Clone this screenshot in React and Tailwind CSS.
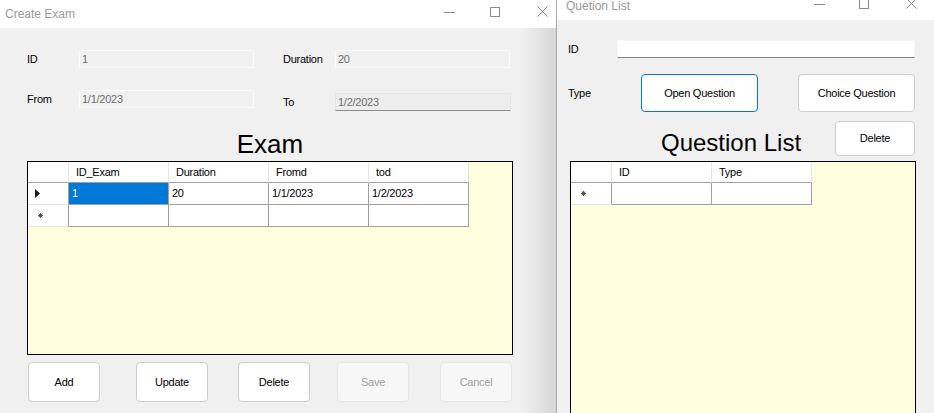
import React from "react";

const MinIcon = () => (
  <svg width="11" height="11" viewBox="0 0 11 11">
    <line x1="0" y1="6.5" x2="11" y2="6.5" stroke="#8a8a8a" strokeWidth="1" />
  </svg>
);

const MaxIcon = () => (
  <svg width="11" height="11" viewBox="0 0 11 11">
    <rect x="0.5" y="1.5" width="9" height="9" fill="none" stroke="#8a8a8a" strokeWidth="1" />
  </svg>
);

const CloseIcon = () => (
  <svg width="11" height="11" viewBox="0 0 11 11">
    <line x1="0.5" y1="0.5" x2="10.5" y2="10.5" stroke="#8a8a8a" strokeWidth="1" />
    <line x1="10.5" y1="0.5" x2="0.5" y2="10.5" stroke="#8a8a8a" strokeWidth="1" />
  </svg>
);

const RowArrow = () => (
  <svg width="5" height="9" viewBox="0 0 5 9">
    <path d="M0 0 L5 4.5 L0 9 Z" fill="#1a1a1a" />
  </svg>
);

const NewRowMark = () => (
  <svg width="5" height="5" viewBox="0 0 5 5">
    <line x1="2.5" y1="0" x2="2.5" y2="5" stroke="#555" strokeWidth="1.2" />
    <line x1="0" y1="2.5" x2="5" y2="2.5" stroke="#555" strokeWidth="1.2" />
    <line x1="0.7" y1="0.7" x2="4.3" y2="4.3" stroke="#555" strokeWidth="1" />
    <line x1="4.3" y1="0.7" x2="0.7" y2="4.3" stroke="#555" strokeWidth="1" />
  </svg>
);

const ReadBox = ({ value, picker }) => (
  <div
    className={
      picker
        ? "flex h-[18px] w-[176px] items-center border border-[#e4e4e4] border-b-[#8c8c8c] bg-[#ededed] pl-[2px] text-[#6d6d6d]"
        : "flex h-[18px] w-[175px] items-center border border-[#fbfbfb] bg-[#f0f0f0] pl-[2px] text-[#6d6d6d]"
    }
  >
    {value}
  </div>
);

const WinButton = ({ children, disabled, focused, className = "" }) => (
  <div
    className={`flex items-center justify-center rounded-[4px] border text-[11px] ${
      disabled
        ? "border-[#e6e6e6] bg-[#f7f7f7] text-[#a0a0a0]"
        : focused
        ? "border-[#0078d7] bg-white text-black"
        : "border-[#cccccc] bg-white text-black"
    } ${className}`}
  >
    {children}
  </div>
);

const DataGrid = ({ columns, rows, className }) => (
  <div className={`overflow-hidden border border-black bg-[#ffffe0] ${className}`}>
    <div className="flex">
      <div className="h-[21px] w-[41px] border-b border-r border-b-[#a0a0a0] border-r-[#e5e5e5] bg-white" />
      {columns.map((c) => (
        <div
          key={c}
          className="flex h-[21px] w-[100px] items-center border-b border-r border-b-[#a0a0a0] border-r-[#e5e5e5] bg-white pl-[7px]"
        >
          {c}
        </div>
      ))}
    </div>
    {rows.map((r, i) => (
      <div key={i} className="flex">
        <div className="flex h-[22px] w-[41px] items-center border-b border-r border-b-[#e5e5e5] border-r-[#a0a0a0] bg-white">
          {r.current ? (
            <span className="pl-[7px]">
              <RowArrow />
            </span>
          ) : (
            <span className="pl-[10px]">
              <NewRowMark />
            </span>
          )}
        </div>
        {columns.map((c, j) => (
          <div
            key={c}
            className={`flex h-[22px] w-[100px] items-center border-b border-r border-[#a0a0a0] pl-[3px] ${
              r.current && j === 0 ? "bg-[#0078d7] text-white" : "bg-white"
            }`}
          >
            {r.cells ? r.cells[j] : ""}
          </div>
        ))}
      </div>
    ))}
  </div>
);

export default function App() {
  return (
    <div className="flex h-[413px] w-[934px] overflow-hidden bg-[#f0f0f0] font-['Liberation_Sans',Arial,sans-serif] text-[11px] tracking-[-0.25px] text-black">
      {/* Create Exam window */}
      <div className="relative flex h-[413px] w-[556px] shrink-0 flex-col bg-[#f0f0f0]">
        <div className="flex h-[28px] shrink-0 bg-white">
          <span className="self-center pl-[5px] text-[12px] tracking-normal text-[#9a9a9a]">Create Exam</span>
          <div className="ml-auto flex pr-[8px] pt-[6px]">
            <MinIcon />
            <span className="ml-[35px]">
              <MaxIcon />
            </span>
            <span className="ml-[36px]">
              <CloseIcon />
            </span>
          </div>
        </div>
        <div className="pl-[27px] pt-[22px]">
          <div className="flex h-[18px] items-center">
            <span className="w-[52px]">ID</span>
            <ReadBox value="1" />
            <span className="ml-[29px] w-[52px]">Duration</span>
            <ReadBox value="20" />
          </div>
          <div className="mt-[22px] flex items-start">
            <div className="flex h-[18px] items-center">
              <span className="w-[52px]">From</span>
              <ReadBox value="1/1/2023" />
            </div>
            <div className="ml-[29px] mt-[3px] flex h-[18px] items-center">
              <span className="w-[52px]">To</span>
              <ReadBox value="1/2/2023" picker />
            </div>
          </div>
          <div className="flex h-[50px] w-[486px] items-end justify-center pb-[4px]">
            <span className="text-[26px] leading-none tracking-normal">Exam</span>
          </div>
          <DataGrid
            className="h-[194px] w-[486px]"
            columns={["ID_Exam", "Duration", "Fromd", "tod"]}
            rows={[
              { current: true, cells: ["1", "20", "1/1/2023", "1/2/2023"] },
              { current: false },
            ]}
          />
          <div className="mt-[7px] flex">
            <WinButton className="ml-[1px] h-[40px] w-[72px]">Add</WinButton>
            <WinButton className="ml-[36px] h-[40px] w-[72px]">Update</WinButton>
            <WinButton className="ml-[30px] h-[40px] w-[72px]">Delete</WinButton>
            <WinButton disabled className="ml-[27px] h-[40px] w-[72px]">
              Save
            </WinButton>
            <WinButton disabled className="ml-[31px] h-[40px] w-[72px]">
              Cancel
            </WinButton>
          </div>
        </div>
        <div className="pointer-events-none absolute bottom-0 right-0 top-[28px] w-[34px] bg-linear-to-r from-transparent to-black/[0.11]" />
      </div>

      {/* Question List window */}
      <div className="relative flex h-[413px] flex-1 flex-col overflow-hidden border-l border-[#a9a9a9] bg-[#f0f0f0]">
        <div className="-mt-[8px] flex h-[28px] shrink-0 bg-white">
          <span className="self-center pl-[9px] text-[12px] tracking-normal text-[#9a9a9a]">Quetion List</span>
          <div className="ml-auto flex pr-[17px] pt-[6px]">
            <MinIcon />
            <span className="ml-[34px]">
              <MaxIcon />
            </span>
            <span className="ml-[36px]">
              <CloseIcon />
            </span>
          </div>
        </div>
        <div className="pl-[11px] pr-[19px] pt-[20px]">
          <div className="flex h-[18px] items-center">
            <span className="w-[49px]">ID</span>
            <div className="h-[18px] flex-1 border border-[#f7f7f7] border-b-[#808080] bg-white" />
          </div>
          <div className="mt-[16px] flex h-[38px] items-center">
            <span className="w-[73px]">Type</span>
            <WinButton focused className="h-[38px] w-[117px]">
              Open Question
            </WinButton>
            <WinButton className="ml-[40px] h-[38px] w-[117px]">Choice Question</WinButton>
          </div>
          <div className="mt-[9px] flex items-start">
            <span className="ml-[93px] mt-[10px] text-[24px] leading-none tracking-normal">Question List</span>
            <WinButton className="ml-auto h-[35px] w-[80px]">Delete</WinButton>
          </div>
          <DataGrid
            className="ml-[2px] mt-[5px] h-[300px] w-[346px]"
            columns={["ID", "Type"]}
            rows={[{ current: false }]}
          />
        </div>
      </div>
    </div>
  );
}
